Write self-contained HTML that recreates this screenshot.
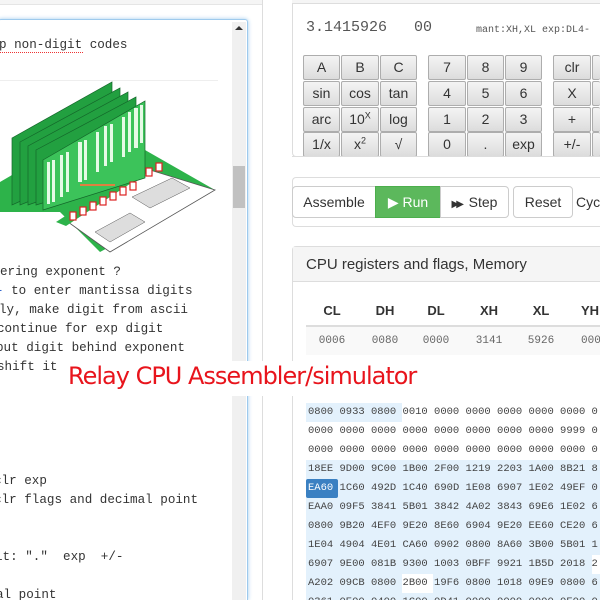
<!DOCTYPE html>
<html><head><style>
*{margin:0;padding:0;box-sizing:border-box}
html,body{width:600px;height:600px;overflow:hidden}
body{background:#fff;position:relative;font-family:"Liberation Sans",sans-serif;color:#333}
.a{position:absolute}
.code{font-family:"Liberation Mono",monospace;font-size:12.6px;color:#333;white-space:pre;position:absolute}
.btn{position:absolute;height:25px;border:1px solid #adadad;border-radius:2px;background:linear-gradient(#f4f4f4,#dcdcdc);font-size:14px;text-align:center;line-height:23px;color:#333}
.mem{position:absolute;left:308px;font-family:"Liberation Mono",monospace;font-size:10.5px;color:#444;white-space:pre;height:19px;line-height:19px}
.reg{position:absolute;font-size:13px;font-weight:bold;color:#333;width:50px;text-align:center}
.rv{position:absolute;font-size:11px;font-family:"Liberation Mono",monospace;color:#666;width:50px;text-align:center}
</style></head><body>
<div class="a" style="left:0;top:0;width:262px;height:5px;background:#f5f5f5;border-bottom:1px solid #e5e5e5"></div>
<div class="a" style="left:262px;top:0;width:1px;height:600px;background:#ddd"></div>
<div class="a" style="left:-2px;top:19px;width:250px;height:581px;border:1px solid #9ecaed;border-bottom:none;border-radius:3px 3px 0 0;box-shadow:0 0 4px #9ecaed"></div>
<div class="a" style="left:232px;top:22px;width:14px;height:578px;background:#f0f0f0"></div>
<div class="a" style="left:233px;top:166px;width:12px;height:42px;background:#c1c1c1"></div>
<div class="a" style="left:235px;top:26px;width:0;height:0;border-left:4px solid transparent;border-right:4px solid transparent;border-bottom:4px solid #333"></div>
<div class="a" style="left:0;top:80px;width:218px;height:1px;background:#eee"></div>
<div class="code" style="left:-1px;top:38px">p non-digit codes</div>
<div class="a" style="left:0;top:52px;width:83px;border-bottom:1px dotted #e33"></div>
<svg class="a" style="left:0;top:80px" width="220" height="175" viewBox="0 80 220 175">
<polygon points="0,182 55,150 145,150 215,190 100,252 60,212 0,212" fill="#2db34a"/>
<polygon points="68,222 150,170 215,190 110,252" fill="#fff" stroke="#555" stroke-width="0.8"/>
<polygon points="56,222 140,168 148,172 66,226" fill="#2db34a"/>
<g fill="#22a040" stroke="#14662a" stroke-width="0.7">
<polygon points="12,138 112,82 112,160 12,205"/>
<polygon points="20,142 120,88 120,165 20,205"/>
<polygon points="28,146 128,92 128,170 28,205"/>
<polygon points="36,150 136,97 136,175 36,205"/>
</g>
<polygon points="43,160 145,101 145,178 43,210" fill="#3cc35a" stroke="#14662a" stroke-width="0.7"/>
<g fill="#e6fae6">
<rect x="47" y="162" width="3" height="42"/><rect x="52" y="160" width="3" height="42"/><rect x="60" y="155" width="3" height="42"/><rect x="66" y="152" width="3" height="40"/><rect x="78" y="142" width="4" height="40"/><rect x="84" y="140" width="3" height="40"/><rect x="96" y="132" width="3" height="40"/><rect x="104" y="126" width="3" height="40"/><rect x="110" y="124" width="3" height="38"/><rect x="122" y="117" width="3" height="40"/><rect x="128" y="112" width="3" height="40"/><rect x="134" y="108" width="4" height="40"/><rect x="140" y="105" width="3" height="38"/>
</g>
<rect x="80" y="184" width="35" height="2" fill="#e08040"/>
<g fill="#fff" stroke="#d22" stroke-width="1.2">
<rect x="70" y="212" width="6" height="8"/><rect x="80" y="207" width="6" height="8"/><rect x="90" y="202" width="6" height="8"/><rect x="100" y="197" width="6" height="8"/><rect x="110" y="192" width="6" height="8"/><rect x="120" y="187" width="6" height="8"/><rect x="130" y="182" width="6" height="8"/>
<rect x="146" y="168" width="6" height="8"/><rect x="156" y="163" width="6" height="8"/>
</g>
<g fill="#ddd" stroke="#555" stroke-width="0.5">
<polygon points="132,197 172,178 190,188 150,208"/>
<polygon points="95,232 130,213 145,222 110,242"/>
</g>
</svg>
<div class="code" style="left:0;top:265px">ering exponent ?</div>
<div class="code" style="left:-4px;top:284px"><span style="color:#36c">-</span> to enter mantissa digits</div>
<div class="code" style="left:-1px;top:303px">ly, make digit from ascii</div>
<div class="code" style="left:-3px;top:322px">continue for exp digit</div>
<div class="code" style="left:-4px;top:341px">put digit behind exponent</div>
<div class="code" style="left:-6px;top:474px">clr exp</div>
<div class="code" style="left:-6px;top:493px">clr flags and decimal point</div>
<div class="code" style="left:-5px;top:550px">it: "."  exp  +/-</div>
<div class="code" style="left:-4px;top:588px">al point</div>
<div class="a" style="left:292px;top:-3px;width:308px;height:160px;border:1px solid #ddd;border-right:none;border-radius:4px 0 0 4px"></div>
<div class="a" style="left:292px;top:0;width:308px;height:4px;background:#f5f5f5;border-bottom:1px solid #ddd"></div>
<div class="a" style="left:306px;top:19px;font-family:'Liberation Mono',monospace;font-size:15px;color:#555;white-space:pre">3.1415926   00</div>
<div class="a" style="left:476px;top:25px;font-family:'Liberation Mono',monospace;font-size:10px;color:#555;white-space:nowrap">mant:XH,XL exp:DL4-</div>
<div class="btn" style="left:303px;top:55px;width:37px">A</div><div class="btn" style="left:341px;top:55px;width:38px">B</div><div class="btn" style="left:380px;top:55px;width:37px">C</div>
<div class="btn" style="left:303px;top:81px;width:37px">sin</div><div class="btn" style="left:341px;top:81px;width:38px">cos</div><div class="btn" style="left:380px;top:81px;width:37px">tan</div>
<div class="btn" style="left:303px;top:107px;width:37px">arc</div><div class="btn" style="left:341px;top:107px;width:38px">10<sup style="font-size:9px;line-height:0">X</sup></div><div class="btn" style="left:380px;top:107px;width:37px">log</div>
<div class="btn" style="left:303px;top:132px;width:37px">1/x</div><div class="btn" style="left:341px;top:132px;width:38px">x<sup style="font-size:9px;line-height:0">2</sup></div><div class="btn" style="left:380px;top:132px;width:37px">√</div>
<div class="btn" style="left:428px;top:55px;width:38px">7</div><div class="btn" style="left:467px;top:55px;width:37px">8</div><div class="btn" style="left:505px;top:55px;width:37px">9</div>
<div class="btn" style="left:428px;top:81px;width:38px">4</div><div class="btn" style="left:467px;top:81px;width:37px">5</div><div class="btn" style="left:505px;top:81px;width:37px">6</div>
<div class="btn" style="left:428px;top:107px;width:38px">1</div><div class="btn" style="left:467px;top:107px;width:37px">2</div><div class="btn" style="left:505px;top:107px;width:37px">3</div>
<div class="btn" style="left:428px;top:132px;width:38px">0</div><div class="btn" style="left:467px;top:132px;width:37px">.</div><div class="btn" style="left:505px;top:132px;width:37px">exp</div>
<div class="btn" style="left:553px;top:55px;width:38px">clr</div><div class="btn" style="left:592px;top:55px;width:8px;border-right:none"></div>
<div class="btn" style="left:553px;top:81px;width:38px">X</div><div class="btn" style="left:592px;top:81px;width:8px;border-right:none"></div>
<div class="btn" style="left:553px;top:107px;width:38px">+</div><div class="btn" style="left:592px;top:107px;width:8px;border-right:none"></div>
<div class="btn" style="left:553px;top:132px;width:38px">+/-</div><div class="btn" style="left:592px;top:132px;width:8px;border-right:none"></div>
<div class="a" style="left:292px;top:156px;width:308px;height:1px;background:#ddd"></div>
<div class="a" style="left:292px;top:177px;width:308px;height:50px;border:1px solid #ddd;border-right:none;border-radius:4px 0 0 4px"></div>
<div class="a" style="left:292px;top:186px;width:84px;height:32px;border:1px solid #ccc;border-radius:4px 0 0 4px;font-size:14px;line-height:30px;text-align:center">Assemble</div>
<div class="a" style="left:375px;top:186px;width:66px;height:32px;background:#5cb85c;border:1px solid #4cae4c;color:#fff;font-size:14px;line-height:30px;text-align:center">&#9654; Run</div>
<div class="a" style="left:440px;top:186px;width:69px;height:32px;border:1px solid #ccc;border-radius:0 4px 4px 0;font-size:14px;line-height:30px;text-align:center"><span style="font-size:10px;letter-spacing:-3px">&#9654;&#9654;</span>&nbsp; Step</div>
<div class="a" style="left:513px;top:186px;width:60px;height:32px;border:1px solid #ccc;border-radius:4px;font-size:14px;line-height:30px;text-align:center">Reset</div>
<div class="a" style="left:576px;top:194px;font-size:14px">Cyc</div>
<div class="a" style="left:292px;top:246px;width:308px;height:354px;border:1px solid #ddd;border-right:none;border-bottom:none;border-radius:4px 0 0 0"></div>
<div class="a" style="left:293px;top:247px;width:307px;height:35px;background:#f5f5f5;border-bottom:1px solid #ddd"></div>
<div class="a" style="left:306px;top:256px;font-size:15px">CPU registers and flags, Memory</div>
<div class="reg" style="left:307px;top:303px">CL</div><div class="reg" style="left:360px;top:303px">DH</div><div class="reg" style="left:411px;top:303px">DL</div><div class="reg" style="left:464px;top:303px">XH</div><div class="reg" style="left:516px;top:303px">XL</div><div class="reg" style="left:568px;top:303px;width:32px;overflow:hidden;text-align:left;padding-left:13px">YH</div>
<div class="a" style="left:306px;top:325px;width:294px;height:2px;background:#ddd"></div>
<div class="a" style="left:306px;top:327px;width:294px;height:28px;background:#f9f9f9"></div>
<div class="rv" style="left:307px;top:335px">0006</div><div class="rv" style="left:360px;top:335px">0080</div><div class="rv" style="left:411px;top:335px">0000</div><div class="rv" style="left:464px;top:335px">3141</div><div class="rv" style="left:516px;top:335px">5926</div><div class="rv" style="left:568px;top:335px;width:32px;text-align:left;padding-left:13px;overflow:hidden">000</div>
<div class="a" style="left:306px;top:403px;width:96px;height:19px;background:#e3f1fc"></div>
<div class="a" style="left:306px;top:460px;width:294px;height:140px;background:#e3f1fc"></div>
<div class="a" style="left:306px;top:479px;width:32px;height:19px;background:#3a80c2;border-radius:2px"></div>
<div class="a" style="left:592px;top:555px;width:8px;height:19px;background:#fff"></div>
<div class="a" style="left:402px;top:574px;width:31px;height:19px;background:#fff"></div>
<div class="a" style="left:306px;top:403px;width:294px;height:197px;overflow:hidden">
<div class="mem" style="left:2px;top:0">0800 0933 0800 0010 0000 0000 0000 0000 0000 0</div>
<div class="mem" style="left:2px;top:19px">0000 0000 0000 0000 0000 0000 0000 0000 9999 0</div>
<div class="mem" style="left:2px;top:38px">0000 0000 0000 0000 0000 0000 0000 0000 0000 0</div>
<div class="mem" style="left:2px;top:57px">18EE 9D00 9C00 1B00 2F00 1219 2203 1A00 8B21 8</div>
<div class="mem" style="left:2px;top:76px"><span style="color:#fff">EA60</span> 1C60 492D 1C40 690D 1E08 6907 1E02 49EF 0</div>
<div class="mem" style="left:2px;top:95px">EAA0 09F5 3841 5B01 3842 4A02 3843 69E6 1E02 6</div>
<div class="mem" style="left:2px;top:114px">0800 9B20 4EF0 9E20 8E60 6904 9E20 EE60 CE20 6</div>
<div class="mem" style="left:2px;top:133px">1E04 4904 4E01 CA60 0902 0800 8A60 3B00 5B01 1</div>
<div class="mem" style="left:2px;top:152px">6907 9E00 081B 9300 1003 0BFF 9921 1B5D 2018 2</div>
<div class="mem" style="left:2px;top:171px">A202 09CB 0800 2B00 19F6 0800 1018 09E9 0800 6</div>
<div class="mem" style="left:2px;top:190px">0361 0E00 0400 1C00 0D41 0000 0000 0000 0E00 0</div>
</div>
<div class="a" style="left:0;top:361px;width:425px;height:35px;background:#fff"></div>
<div class="code" style="left:-3px;top:360px">shift it</div>
<div class="a" style="left:68px;top:362px;font-size:24px;color:#e8141c;font-family:'DejaVu Sans','Liberation Sans',sans-serif;letter-spacing:-1px;white-space:nowrap">Relay CPU Assembler/simulator</div>
</body></html>
